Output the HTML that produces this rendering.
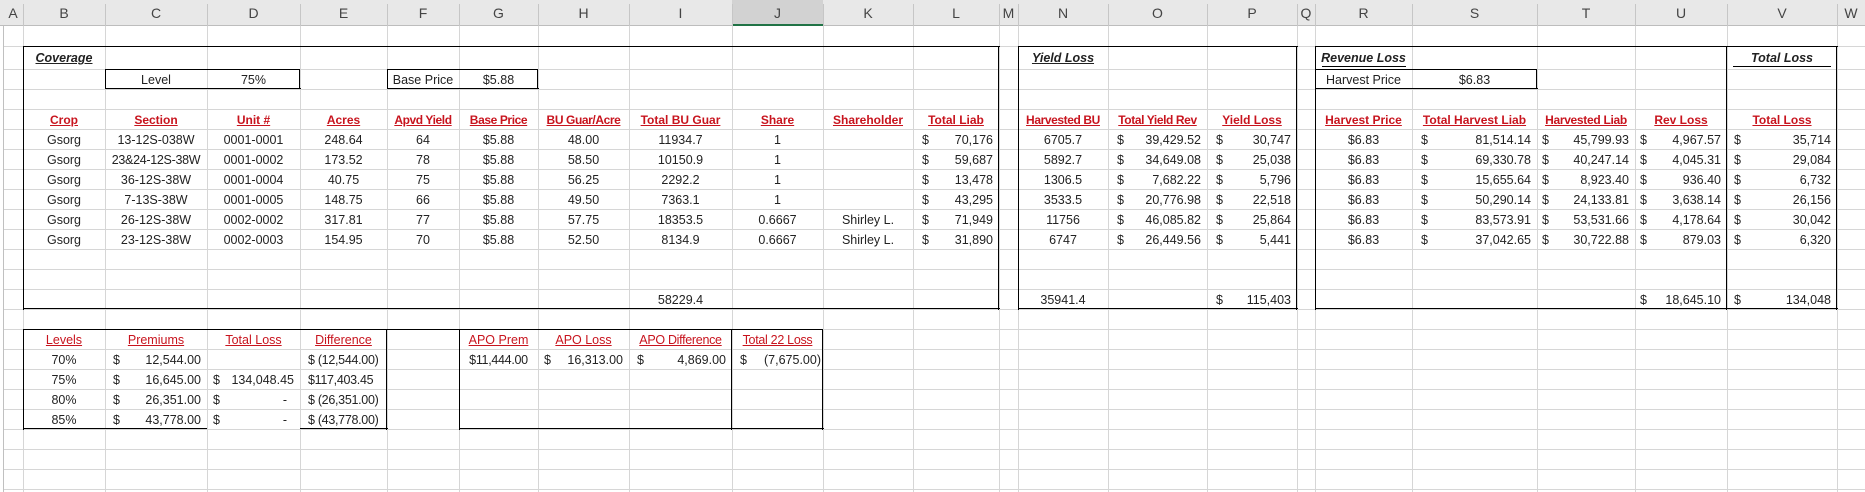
<!DOCTYPE html>
<html><head><meta charset="utf-8"><style>
*{margin:0;padding:0;box-sizing:border-box}
body{width:1865px;height:492px;overflow:hidden;background:#fff;position:relative;font-family:"Liberation Sans",Arial,sans-serif;font-size:12.5px;color:#222}
.hb{position:absolute;left:0;top:0;width:1865px;height:26px;background:#e8e8e8;border-bottom:1px solid #bdbdbd}
.hl{position:absolute;top:0;height:26px;text-align:center;line-height:26px;color:#444;font-size:14px}
.vl{position:absolute;top:26px;height:466px;width:1px;background:#d6d6d6}
.vh{position:absolute;top:4px;height:22px;width:1px;background:#c6c6c6}
.hz{position:absolute;left:3px;width:1862px;height:1px;background:#d6d6d6}
.c{position:absolute;height:20px;line-height:22px;white-space:nowrap;text-align:center}
.h{color:#c8141e;font-weight:bold;text-decoration:underline;font-size:12px}
.hr{color:#c8141e;text-decoration:underline}
.t{font-weight:bold;font-style:italic;text-decoration:underline}
.d{position:absolute;left:9px}
.n{position:absolute;right:6px}
.b{position:absolute;background:#000}
</style></head><body>
<div class="hb"></div>
<div class="hz" style="top:46px"></div><div class="hz" style="top:69px"></div>
<div class="hz" style="top:89px"></div><div class="hz" style="top:109px"></div><div class="hz" style="top:129px"></div>
<div class="hz" style="top:149px"></div><div class="hz" style="top:169px"></div><div class="hz" style="top:189px"></div>
<div class="hz" style="top:209px"></div><div class="hz" style="top:229px"></div><div class="hz" style="top:249px"></div>
<div class="hz" style="top:269px"></div><div class="hz" style="top:289px"></div><div class="hz" style="top:309px"></div>
<div class="hz" style="top:329px"></div><div class="hz" style="top:349px"></div><div class="hz" style="top:369px"></div>
<div class="hz" style="top:389px"></div><div class="hz" style="top:409px"></div><div class="hz" style="top:429px"></div>
<div class="hz" style="top:449px"></div><div class="hz" style="top:469px"></div><div class="hz" style="top:489px"></div>

<div class="vl" style="left:3px;background:#c0c0c0"></div>
<div class="vl" style="left:23px"></div><div class="vl" style="left:105px"></div><div class="vl" style="left:207px"></div>
<div class="vl" style="left:300px"></div><div class="vl" style="left:387px"></div><div class="vl" style="left:459px"></div>
<div class="vl" style="left:538px"></div><div class="vl" style="left:629px"></div><div class="vl" style="left:732px"></div>
<div class="vl" style="left:823px"></div><div class="vl" style="left:913px"></div><div class="vl" style="left:999px"></div>
<div class="vl" style="left:1018px"></div><div class="vl" style="left:1108px"></div><div class="vl" style="left:1207px"></div>
<div class="vl" style="left:1297px"></div><div class="vl" style="left:1315px"></div><div class="vl" style="left:1412px"></div>
<div class="vl" style="left:1537px"></div><div class="vl" style="left:1635px"></div><div class="vl" style="left:1727px"></div>
<div class="vl" style="left:1837px"></div>

<div style="position:absolute;left:732px;top:0;width:91px;height:26px;background:#d2d2d2;border-bottom:2px solid #217346"></div>
<div class="vh" style="left:23px"></div><div class="vh" style="left:105px"></div><div class="vh" style="left:207px"></div>
<div class="vh" style="left:300px"></div><div class="vh" style="left:387px"></div><div class="vh" style="left:459px"></div>
<div class="vh" style="left:538px"></div><div class="vh" style="left:629px"></div><div class="vh" style="left:732px"></div>
<div class="vh" style="left:823px"></div><div class="vh" style="left:913px"></div><div class="vh" style="left:999px"></div>
<div class="vh" style="left:1018px"></div><div class="vh" style="left:1108px"></div><div class="vh" style="left:1207px"></div>
<div class="vh" style="left:1297px"></div><div class="vh" style="left:1315px"></div><div class="vh" style="left:1412px"></div>
<div class="vh" style="left:1537px"></div><div class="vh" style="left:1635px"></div><div class="vh" style="left:1727px"></div>
<div class="vh" style="left:1837px"></div>
<div class="hl" style="left:3px;width:20px">A</div><div class="hl" style="left:23px;width:82px">B</div>
<div class="hl" style="left:105px;width:102px">C</div><div class="hl" style="left:207px;width:93px">D</div>
<div class="hl" style="left:300px;width:87px">E</div><div class="hl" style="left:387px;width:72px">F</div>
<div class="hl" style="left:459px;width:79px">G</div><div class="hl" style="left:538px;width:91px">H</div>
<div class="hl" style="left:629px;width:103px">I</div><div class="hl" style="left:732px;width:91px">J</div>
<div class="hl" style="left:823px;width:90px">K</div><div class="hl" style="left:913px;width:86px">L</div>
<div class="hl" style="left:999px;width:19px">M</div><div class="hl" style="left:1018px;width:90px">N</div>
<div class="hl" style="left:1108px;width:99px">O</div><div class="hl" style="left:1207px;width:90px">P</div>
<div class="hl" style="left:1297px;width:18px">Q</div><div class="hl" style="left:1315px;width:97px">R</div>
<div class="hl" style="left:1412px;width:125px">S</div><div class="hl" style="left:1537px;width:98px">T</div>
<div class="hl" style="left:1635px;width:92px">U</div><div class="hl" style="left:1727px;width:110px">V</div>
<div class="hl" style="left:1837px;width:28px">W</div>

<!-- boxes -->
<div class="b" style="left:23px;top:46px;width:977px;height:1.4px"></div>
<div class="b" style="left:23px;top:308px;width:977px;height:1.4px"></div>
<div class="b" style="left:23px;top:46px;width:1.4px;height:264px"></div>
<div class="b" style="left:998px;top:46px;width:1.4px;height:264px"></div>
<div class="b" style="left:105px;top:69px;width:195px;height:1.4px"></div>
<div class="b" style="left:105px;top:88px;width:196px;height:1.4px"></div>
<div class="b" style="left:105px;top:69px;width:1.4px;height:20px"></div>
<div class="b" style="left:299px;top:69px;width:1.4px;height:20px"></div>
<div class="b" style="left:387px;top:69px;width:151px;height:1.4px"></div>
<div class="b" style="left:387px;top:88px;width:152px;height:1.4px"></div>
<div class="b" style="left:387px;top:69px;width:1.4px;height:20px"></div>
<div class="b" style="left:537px;top:69px;width:1.4px;height:20px"></div>

<div class="b" style="left:1018px;top:46px;width:280px;height:1.4px"></div>
<div class="b" style="left:1018px;top:308px;width:280px;height:1.4px"></div>
<div class="b" style="left:1018px;top:46px;width:1.4px;height:264px"></div>
<div class="b" style="left:1296px;top:46px;width:1.4px;height:264px"></div>

<div class="b" style="left:1315px;top:46px;width:523px;height:1.4px"></div>
<div class="b" style="left:1315px;top:308px;width:523px;height:1.4px"></div>
<div class="b" style="left:1315px;top:46px;width:1.4px;height:264px"></div>
<div class="b" style="left:1726px;top:46px;width:1.4px;height:264px"></div>
<div class="b" style="left:1836px;top:46px;width:1.4px;height:264px"></div>
<div class="b" style="left:1315px;top:69px;width:222px;height:1.4px"></div>
<div class="b" style="left:1315px;top:88px;width:223px;height:1.4px"></div>
<div class="b" style="left:1536px;top:69px;width:1.4px;height:20px"></div>
<div class="b" style="left:1322px;top:66px;width:84px;height:1px"></div>
<div class="b" style="left:1733px;top:66px;width:98px;height:1px"></div>

<div class="b" style="left:23px;top:329px;width:800px;height:1.4px"></div>
<div class="b" style="left:23px;top:428px;width:184px;height:1.4px"></div>
<div class="b" style="left:300px;top:428px;width:88px;height:1.4px"></div>
<div class="b" style="left:459px;top:428px;width:365px;height:1.4px"></div>
<div class="b" style="left:23px;top:329px;width:1.4px;height:101px"></div>
<div class="b" style="left:386px;top:329px;width:1.4px;height:101px"></div>
<div class="b" style="left:459px;top:329px;width:1.4px;height:101px"></div>
<div class="b" style="left:731px;top:329px;width:1.4px;height:101px"></div>
<div class="b" style="left:822px;top:329px;width:1.4px;height:101px"></div>

<!-- titles -->
<div class="c t" style="left:23px;width:82px;top:47px">Coverage</div>
<div class="c" style="left:105px;width:102px;top:69px">Level</div>
<div class="c" style="left:207px;width:93px;top:69px">75%</div>
<div class="c" style="left:387px;width:72px;top:69px">Base Price</div>
<div class="c" style="left:459px;width:79px;top:69px">$5.88</div>
<div class="c t" style="left:1018px;width:90px;top:47px">Yield Loss</div>
<div class="c t" style="left:1315px;width:97px;top:47px;text-decoration:none">Revenue Loss</div>
<div class="c" style="left:1315px;width:97px;top:69px">Harvest Price</div>
<div class="c" style="left:1412px;width:125px;top:69px">$6.83</div>
<div class="c t" style="left:1727px;width:110px;top:47px;text-decoration:none">Total Loss</div>

<!-- headers -->
<div class="c h" style="left:23px;width:82px;top:109px">Crop</div>
<div class="c h" style="left:105px;width:102px;top:109px">Section</div>
<div class="c h" style="left:207px;width:93px;top:109px">Unit #</div>
<div class="c h" style="left:300px;width:87px;top:109px">Acres</div>
<div class="c h" style="left:387px;width:72px;top:109px;letter-spacing:-0.4px">Apvd Yield</div>
<div class="c h" style="left:459px;width:79px;top:109px;letter-spacing:-0.4px">Base Price</div>
<div class="c h" style="left:538px;width:91px;top:109px;letter-spacing:-0.4px">BU Guar/Acre</div>
<div class="c h" style="left:629px;width:103px;top:109px">Total BU Guar</div>
<div class="c h" style="left:732px;width:91px;top:109px">Share</div>
<div class="c h" style="left:823px;width:90px;top:109px">Shareholder</div>
<div class="c h" style="left:913px;width:86px;top:109px">Total Liab</div>
<div class="c h" style="left:1018px;width:90px;top:109px;letter-spacing:-0.4px">Harvested BU</div>
<div class="c h" style="left:1108px;width:99px;top:109px;letter-spacing:-0.4px">Total Yield Rev</div>
<div class="c h" style="left:1207px;width:90px;top:109px">Yield Loss</div>
<div class="c h" style="left:1315px;width:97px;top:109px">Harvest Price</div>
<div class="c h" style="left:1412px;width:125px;top:109px">Total Harvest Liab</div>
<div class="c h" style="left:1537px;width:98px;top:109px;letter-spacing:-0.3px">Harvested Liab</div>
<div class="c h" style="left:1635px;width:92px;top:109px">Rev Loss</div>
<div class="c h" style="left:1727px;width:110px;top:109px">Total Loss</div>

<!-- data rows -->
<div class="c" style="left:23px;width:82px;top:129px">Gsorg</div>
<div class="c" style="left:23px;width:82px;top:149px">Gsorg</div>
<div class="c" style="left:23px;width:82px;top:169px">Gsorg</div>
<div class="c" style="left:23px;width:82px;top:189px">Gsorg</div>
<div class="c" style="left:23px;width:82px;top:209px">Gsorg</div>
<div class="c" style="left:23px;width:82px;top:229px">Gsorg</div>
<div class="c" style="left:105px;width:102px;top:129px">13-12S-038W</div>
<div class="c" style="left:105px;width:102px;top:149px;letter-spacing:-0.3px">23&amp;24-12S-38W</div>
<div class="c" style="left:105px;width:102px;top:169px">36-12S-38W</div>
<div class="c" style="left:105px;width:102px;top:189px">7-13S-38W</div>
<div class="c" style="left:105px;width:102px;top:209px">26-12S-38W</div>
<div class="c" style="left:105px;width:102px;top:229px">23-12S-38W</div>
<div class="c" style="left:207px;width:93px;top:129px">0001-0001</div>
<div class="c" style="left:207px;width:93px;top:149px">0001-0002</div>
<div class="c" style="left:207px;width:93px;top:169px">0001-0004</div>
<div class="c" style="left:207px;width:93px;top:189px">0001-0005</div>
<div class="c" style="left:207px;width:93px;top:209px">0002-0002</div>
<div class="c" style="left:207px;width:93px;top:229px">0002-0003</div>
<div class="c" style="left:300px;width:87px;top:129px">248.64</div>
<div class="c" style="left:300px;width:87px;top:149px">173.52</div>
<div class="c" style="left:300px;width:87px;top:169px">40.75</div>
<div class="c" style="left:300px;width:87px;top:189px">148.75</div>
<div class="c" style="left:300px;width:87px;top:209px">317.81</div>
<div class="c" style="left:300px;width:87px;top:229px">154.95</div>
<div class="c" style="left:387px;width:72px;top:129px">64</div>
<div class="c" style="left:387px;width:72px;top:149px">78</div>
<div class="c" style="left:387px;width:72px;top:169px">75</div>
<div class="c" style="left:387px;width:72px;top:189px">66</div>
<div class="c" style="left:387px;width:72px;top:209px">77</div>
<div class="c" style="left:387px;width:72px;top:229px">70</div>
<div class="c" style="left:459px;width:79px;top:129px">$5.88</div>
<div class="c" style="left:459px;width:79px;top:149px">$5.88</div>
<div class="c" style="left:459px;width:79px;top:169px">$5.88</div>
<div class="c" style="left:459px;width:79px;top:189px">$5.88</div>
<div class="c" style="left:459px;width:79px;top:209px">$5.88</div>
<div class="c" style="left:459px;width:79px;top:229px">$5.88</div>
<div class="c" style="left:538px;width:91px;top:129px">48.00</div>
<div class="c" style="left:538px;width:91px;top:149px">58.50</div>
<div class="c" style="left:538px;width:91px;top:169px">56.25</div>
<div class="c" style="left:538px;width:91px;top:189px">49.50</div>
<div class="c" style="left:538px;width:91px;top:209px">57.75</div>
<div class="c" style="left:538px;width:91px;top:229px">52.50</div>
<div class="c" style="left:629px;width:103px;top:129px">11934.7</div>
<div class="c" style="left:629px;width:103px;top:149px">10150.9</div>
<div class="c" style="left:629px;width:103px;top:169px">2292.2</div>
<div class="c" style="left:629px;width:103px;top:189px">7363.1</div>
<div class="c" style="left:629px;width:103px;top:209px">18353.5</div>
<div class="c" style="left:629px;width:103px;top:229px">8134.9</div>
<div class="c" style="left:732px;width:91px;top:129px">1</div>
<div class="c" style="left:732px;width:91px;top:149px">1</div>
<div class="c" style="left:732px;width:91px;top:169px">1</div>
<div class="c" style="left:732px;width:91px;top:189px">1</div>
<div class="c" style="left:732px;width:91px;top:209px">0.6667</div>
<div class="c" style="left:732px;width:91px;top:229px">0.6667</div>
<div class="c" style="left:823px;width:90px;top:209px">Shirley L.</div>
<div class="c" style="left:823px;width:90px;top:229px">Shirley L.</div>

<div class="c" style="left:913px;width:86px;top:129px"><span class="d">$</span><span class="n">70,176</span></div>
<div class="c" style="left:913px;width:86px;top:149px"><span class="d">$</span><span class="n">59,687</span></div>
<div class="c" style="left:913px;width:86px;top:169px"><span class="d">$</span><span class="n">13,478</span></div>
<div class="c" style="left:913px;width:86px;top:189px"><span class="d">$</span><span class="n">43,295</span></div>
<div class="c" style="left:913px;width:86px;top:209px"><span class="d">$</span><span class="n">71,949</span></div>
<div class="c" style="left:913px;width:86px;top:229px"><span class="d">$</span><span class="n">31,890</span></div>

<div class="c" style="left:1018px;width:90px;top:129px">6705.7</div>
<div class="c" style="left:1018px;width:90px;top:149px">5892.7</div>
<div class="c" style="left:1018px;width:90px;top:169px">1306.5</div>
<div class="c" style="left:1018px;width:90px;top:189px">3533.5</div>
<div class="c" style="left:1018px;width:90px;top:209px">11756</div>
<div class="c" style="left:1018px;width:90px;top:229px">6747</div>

<div class="c" style="left:1108px;width:99px;top:129px"><span class="d">$</span><span class="n">39,429.52</span></div>
<div class="c" style="left:1108px;width:99px;top:149px"><span class="d">$</span><span class="n">34,649.08</span></div>
<div class="c" style="left:1108px;width:99px;top:169px"><span class="d">$</span><span class="n">7,682.22</span></div>
<div class="c" style="left:1108px;width:99px;top:189px"><span class="d">$</span><span class="n">20,776.98</span></div>
<div class="c" style="left:1108px;width:99px;top:209px"><span class="d">$</span><span class="n">46,085.82</span></div>
<div class="c" style="left:1108px;width:99px;top:229px"><span class="d">$</span><span class="n">26,449.56</span></div>

<div class="c" style="left:1207px;width:90px;top:129px"><span class="d">$</span><span class="n">30,747</span></div>
<div class="c" style="left:1207px;width:90px;top:149px"><span class="d">$</span><span class="n">25,038</span></div>
<div class="c" style="left:1207px;width:90px;top:169px"><span class="d">$</span><span class="n">5,796</span></div>
<div class="c" style="left:1207px;width:90px;top:189px"><span class="d">$</span><span class="n">22,518</span></div>
<div class="c" style="left:1207px;width:90px;top:209px"><span class="d">$</span><span class="n">25,864</span></div>
<div class="c" style="left:1207px;width:90px;top:229px"><span class="d">$</span><span class="n">5,441</span></div>

<div class="c" style="left:1315px;width:97px;top:129px">$6.83</div>
<div class="c" style="left:1315px;width:97px;top:149px">$6.83</div>
<div class="c" style="left:1315px;width:97px;top:169px">$6.83</div>
<div class="c" style="left:1315px;width:97px;top:189px">$6.83</div>
<div class="c" style="left:1315px;width:97px;top:209px">$6.83</div>
<div class="c" style="left:1315px;width:97px;top:229px">$6.83</div>

<div class="c" style="left:1412px;width:125px;top:129px"><span class="d">$</span><span class="n">81,514.14</span></div>
<div class="c" style="left:1412px;width:125px;top:149px"><span class="d">$</span><span class="n">69,330.78</span></div>
<div class="c" style="left:1412px;width:125px;top:169px"><span class="d">$</span><span class="n">15,655.64</span></div>
<div class="c" style="left:1412px;width:125px;top:189px"><span class="d">$</span><span class="n">50,290.14</span></div>
<div class="c" style="left:1412px;width:125px;top:209px"><span class="d">$</span><span class="n">83,573.91</span></div>
<div class="c" style="left:1412px;width:125px;top:229px"><span class="d">$</span><span class="n">37,042.65</span></div>

<div class="c" style="left:1537px;width:98px;top:129px"><span class="d" style="left:5px">$</span><span class="n">45,799.93</span></div>
<div class="c" style="left:1537px;width:98px;top:149px"><span class="d" style="left:5px">$</span><span class="n">40,247.14</span></div>
<div class="c" style="left:1537px;width:98px;top:169px"><span class="d" style="left:5px">$</span><span class="n">8,923.40</span></div>
<div class="c" style="left:1537px;width:98px;top:189px"><span class="d" style="left:5px">$</span><span class="n">24,133.81</span></div>
<div class="c" style="left:1537px;width:98px;top:209px"><span class="d" style="left:5px">$</span><span class="n">53,531.66</span></div>
<div class="c" style="left:1537px;width:98px;top:229px"><span class="d" style="left:5px">$</span><span class="n">30,722.88</span></div>

<div class="c" style="left:1635px;width:92px;top:129px"><span class="d" style="left:5px">$</span><span class="n">4,967.57</span></div>
<div class="c" style="left:1635px;width:92px;top:149px"><span class="d" style="left:5px">$</span><span class="n">4,045.31</span></div>
<div class="c" style="left:1635px;width:92px;top:169px"><span class="d" style="left:5px">$</span><span class="n">936.40</span></div>
<div class="c" style="left:1635px;width:92px;top:189px"><span class="d" style="left:5px">$</span><span class="n">3,638.14</span></div>
<div class="c" style="left:1635px;width:92px;top:209px"><span class="d" style="left:5px">$</span><span class="n">4,178.64</span></div>
<div class="c" style="left:1635px;width:92px;top:229px"><span class="d" style="left:5px">$</span><span class="n">879.03</span></div>

<div class="c" style="left:1727px;width:110px;top:129px"><span class="d" style="left:7px">$</span><span class="n">35,714</span></div>
<div class="c" style="left:1727px;width:110px;top:149px"><span class="d" style="left:7px">$</span><span class="n">29,084</span></div>
<div class="c" style="left:1727px;width:110px;top:169px"><span class="d" style="left:7px">$</span><span class="n">6,732</span></div>
<div class="c" style="left:1727px;width:110px;top:189px"><span class="d" style="left:7px">$</span><span class="n">26,156</span></div>
<div class="c" style="left:1727px;width:110px;top:209px"><span class="d" style="left:7px">$</span><span class="n">30,042</span></div>
<div class="c" style="left:1727px;width:110px;top:229px"><span class="d" style="left:7px">$</span><span class="n">6,320</span></div>

<!-- totals -->
<div class="c" style="left:629px;width:103px;top:289px">58229.4</div>
<div class="c" style="left:1018px;width:90px;top:289px">35941.4</div>
<div class="c" style="left:1207px;width:90px;top:289px"><span class="d">$</span><span class="n">115,403</span></div>
<div class="c" style="left:1635px;width:92px;top:289px"><span class="d" style="left:5px">$</span><span class="n">18,645.10</span></div>
<div class="c" style="left:1727px;width:110px;top:289px"><span class="d" style="left:7px">$</span><span class="n">134,048</span></div>

<!-- bottom tables -->
<div class="c hr" style="left:23px;width:82px;top:329px">Levels</div>
<div class="c hr" style="left:105px;width:102px;top:329px">Premiums</div>
<div class="c hr" style="left:207px;width:93px;top:329px">Total Loss</div>
<div class="c hr" style="left:300px;width:87px;top:329px">Difference</div>
<div class="c hr" style="left:459px;width:79px;top:329px">APO Prem</div>
<div class="c hr" style="left:538px;width:91px;top:329px">APO Loss</div>
<div class="c hr" style="left:629px;width:103px;top:329px;letter-spacing:-0.3px">APO Difference</div>
<div class="c hr" style="left:732px;width:91px;top:329px;letter-spacing:-0.3px">Total 22 Loss</div>

<div class="c" style="left:23px;width:82px;top:349px">70%</div>
<div class="c" style="left:23px;width:82px;top:369px">75%</div>
<div class="c" style="left:23px;width:82px;top:389px">80%</div>
<div class="c" style="left:23px;width:82px;top:409px">85%</div>
<div class="c" style="left:105px;width:102px;top:349px"><span class="d" style="left:8px">$</span><span class="n">12,544.00</span></div>
<div class="c" style="left:105px;width:102px;top:369px"><span class="d" style="left:8px">$</span><span class="n">16,645.00</span></div>
<div class="c" style="left:105px;width:102px;top:389px"><span class="d" style="left:8px">$</span><span class="n">26,351.00</span></div>
<div class="c" style="left:105px;width:102px;top:409px"><span class="d" style="left:8px">$</span><span class="n">43,778.00</span></div>
<div class="c" style="left:207px;width:93px;top:369px"><span class="d" style="left:6px">$</span><span class="n">134,048.45</span></div>
<div class="c" style="left:207px;width:93px;top:389px"><span class="d" style="left:6px">$</span><span class="n" style="right:13px">-</span></div>
<div class="c" style="left:207px;width:93px;top:409px"><span class="d" style="left:6px">$</span><span class="n" style="right:13px">-</span></div>
<div class="c" style="left:300px;width:87px;top:349px;text-align:left;padding-left:8px;letter-spacing:-0.3px">$ (12,544.00)</div>
<div class="c" style="left:300px;width:87px;top:369px;text-align:left;padding-left:8px;letter-spacing:-0.3px">$117,403.45</div>
<div class="c" style="left:300px;width:87px;top:389px;text-align:left;padding-left:8px;letter-spacing:-0.3px">$ (26,351.00)</div>
<div class="c" style="left:300px;width:87px;top:409px;text-align:left;padding-left:8px;letter-spacing:-0.3px">$ (43,778.00)</div>

<div class="c" style="left:459px;width:79px;top:349px;letter-spacing:-0.3px">$11,444.00</div>
<div class="c" style="left:538px;width:91px;top:349px"><span class="d" style="left:6px">$</span><span class="n">16,313.00</span></div>
<div class="c" style="left:629px;width:103px;top:349px"><span class="d" style="left:8px">$</span><span class="n">4,869.00</span></div>
<div class="c" style="left:732px;width:91px;top:349px"><span class="d" style="left:8px">$</span><span class="n" style="right:2px">(7,675.00)</span></div>
</body></html>
